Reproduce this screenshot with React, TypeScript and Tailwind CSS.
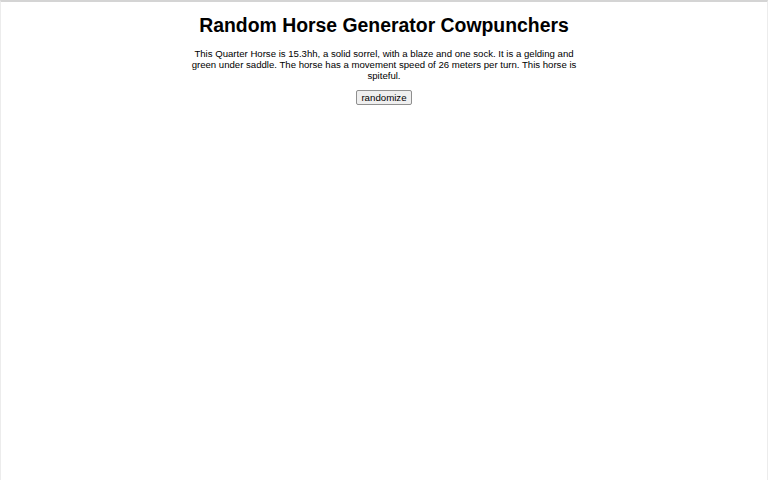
import { useState } from "react";

const HORSE =
  "This Quarter Horse is 15.3hh, a solid sorrel, with a blaze and one sock. It is a gelding and green under saddle. The horse has a movement speed of 26 meters per turn. This horse is spiteful.";

export default function App() {
  const [text] = useState(HORSE);

  return (
    <div
      className="h-[480px] w-full border-t-2 border-x border-t-[#d4d4d4] border-x-[#ececec] bg-white text-black"
      style={{ fontFamily: '"Liberation Sans", Arial, sans-serif' }}
    >
      <div className="flex flex-col items-center pt-[12px]">
        <h1 className="text-[19.4px] font-bold leading-[23px]">
          Random Horse Generator Cowpunchers
        </h1>
        <p className="mt-[11px] w-[392px] text-center text-[9.6px] leading-[11px]">
          {text}
        </p>
        <button className="mt-[9px] rounded-[2px] border border-[#8f8f8f] bg-[#efefef] px-[4px] text-[9.7px] leading-[13px]">
          randomize
        </button>
      </div>
    </div>
  );
}
